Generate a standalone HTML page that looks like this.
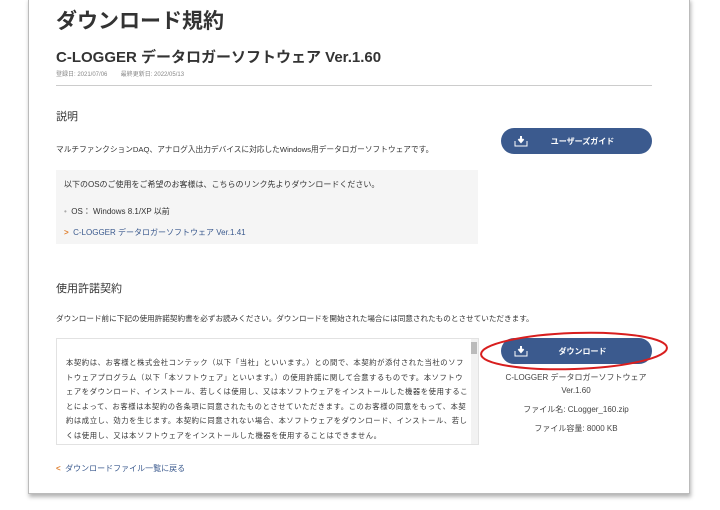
<!DOCTYPE html><html><head><meta charset="utf-8"><style>
body{margin:0;width:720px;height:510px;background:#fff;position:relative;overflow:hidden;font-family:"Liberation Sans","Noto Sans CJK JP",sans-serif;color:#333}
.a{position:absolute;white-space:nowrap}
.card{position:absolute;left:28px;top:-2px;width:660px;height:494px;border:1px solid #bbb;box-shadow:1px 3px 4px rgba(0,0,0,.3);background:#fff}
.btn{position:absolute;left:501px;width:151px;height:26px;border-radius:13px;background:#3b5a8e;color:#fff;font-size:8px;font-weight:bold}
.btn span{position:absolute;left:0;right:0;top:8px;text-align:center;padding-left:12px}
.btn svg{position:absolute;left:13px;top:7px}
.t8{font-size:8px}
</style></head><body>
<div class="card"></div>
<div class="a" style="left:56px;top:5px;font-size:21px;font-weight:bold;color:#333">ダウンロード規約</div>
<div class="a" style="left:56px;top:46px;font-size:15px;font-weight:bold;color:#333">C-LOGGER データロガーソフトウェア Ver.1.60</div>
<div class="a" style="left:56px;top:69px;font-size:6px;color:#888">登録日: 2021/07/06 &nbsp;&nbsp;&nbsp;&nbsp;&nbsp;&nbsp; 最終更新日: 2022/05/13</div>
<div class="a" style="left:56px;top:85px;width:596px;height:1px;background:#ccc"></div>
<div class="a" style="left:56px;top:108px;font-size:11px">説明</div>
<div class="btn" style="top:128px"><svg width="14" height="12" viewBox="0 0 14 12"><path d="M1 6v5h12V6" fill="none" stroke="#fff" stroke-width="1"/><path d="M7 1v5M4.5 4L7 7l2.5-3" fill="none" stroke="#fff" stroke-width="2"/></svg><span>ユーザーズガイド</span></div>
<div class="a" style="left:56px;top:144px;font-size:7.7px">マルチファンクションDAQ、アナログ入出力デバイスに対応したWindows用データロガーソフトウェアです。</div>
<div class="a" style="left:56px;top:170px;width:422px;height:74px;background:#f5f5f5"></div>
<div class="a t8" style="left:64px;top:179px">以下のOSのご使用をご希望のお客様は、こちらのリンク先よりダウンロードください。</div>
<div class="a t8" style="left:64px;top:206px"><span style="color:#aaa">•</span>&nbsp; OS： Windows 8.1/XP 以前</div>
<div class="a t8" style="left:64px;top:227px;color:#3b5a8e"><span style="color:#e08030;font-weight:bold">&gt;</span>&nbsp; C-LOGGER データロガーソフトウェア Ver.1.41</div>
<div class="a" style="left:56px;top:280px;font-size:11px">使用許諾契約</div>
<div class="a" style="left:56px;top:313px;font-size:7.6px">ダウンロード前に下記の使用許諾契約書を必ずお読みください。ダウンロードを開始された場合には同意されたものとさせていただきます。</div>
<div class="a" style="left:56px;top:338px;width:421px;height:105px;border:1px solid #e2e2e2;background:#fff;overflow:hidden">
<div class="a" style="left:9px;top:17px;font-size:7.3px;letter-spacing:0.6px;line-height:14.5px">本契約は、お客様と株式会社コンテック（以下「当社」といいます。）との間で、本契約が添付された当社のソフ<br>トウェアプログラム（以下「本ソフトウェア」といいます。）の使用許諾に関して合意するものです。本ソフトウ<br>ェアをダウンロード、インストール、若しくは使用し、又は本ソフトウェアをインストールした機器を使用するこ<br>とによって、お客様は本契約の各条項に同意されたものとさせていただきます。このお客様の同意をもって、本契<br>約は成立し、効力を生じます。本契約に同意されない場合、本ソフトウェアをダウンロード、インストール、若し<br>くは使用し、又は本ソフトウェアをインストールした機器を使用することはできません。</div>
<div class="a" style="left:414px;top:0;width:7px;height:105px;background:#f2f2f2"></div>
<div class="a" style="left:414px;top:3px;width:6px;height:12px;background:#bbb"></div>
</div>
<div class="btn" style="top:338px"><svg width="14" height="12" viewBox="0 0 14 12"><path d="M1 6v5h12V6" fill="none" stroke="#fff" stroke-width="1"/><path d="M7 1v5M4.5 4L7 7l2.5-3" fill="none" stroke="#fff" stroke-width="2"/></svg><span>ダウンロード</span></div>
<svg class="a" style="left:476px;top:329px" width="196" height="44"><ellipse cx="98" cy="22" rx="93" ry="18" fill="none" stroke="#d81e1e" stroke-width="2" transform="rotate(-2 98 22)"/></svg>
<div class="a t8" style="left:480px;width:192px;text-align:center;top:372px;color:#444">C-LOGGER データロガーソフトウェア</div>
<div class="a t8" style="left:480px;width:192px;text-align:center;top:386px;color:#444">Ver.1.60</div>
<div class="a t8" style="left:480px;width:192px;text-align:center;top:404px;color:#444">ファイル名: CLogger_160.zip</div>
<div class="a t8" style="left:480px;width:192px;text-align:center;top:423px;color:#444">ファイル容量: 8000 KB</div>
<div class="a t8" style="left:56px;top:463px;color:#3b5a8e"><span style="color:#e08030;font-weight:bold">&lt;</span>&nbsp; ダウンロードファイル一覧に戻る</div>
</body></html>
